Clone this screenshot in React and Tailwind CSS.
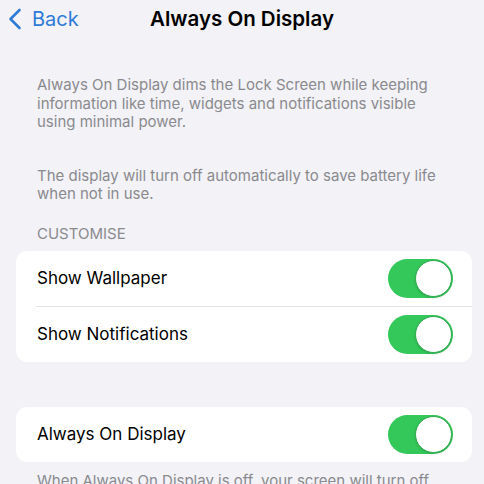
import React from 'react';

function Toggle({ on = true }) {
  return (
    <div
      className={`w-[65px] h-[39px] rounded-full p-[1px] flex ${on ? 'bg-[#34c759] justify-end' : 'bg-[#e5e5ea] justify-start'}`}
    >
      <div className="w-[37px] h-[37px] rounded-full bg-white border border-[#2aa84a] shadow-sm" />
    </div>
  );
}

function Row({ label, divider }) {
  return (
    <div className="flex flex-col">
      <div className="flex items-center justify-between h-[55px] pl-[21px] pr-[19px]">
        <span className="text-[17px] text-black">{label}</span>
        <Toggle />
      </div>
      {divider && <div className="ml-[20px] h-px bg-[#e2e2e7]" />}
    </div>
  );
}

export default function App() {
  return (
    <div className="min-h-screen bg-[#f2f2f7] font-['Inter',sans-serif] overflow-hidden">
      {/* Navigation bar */}
      <div className="grid grid-cols-[1fr_auto_1fr] items-center h-[38px] px-[8px]">
        <button className="flex items-center gap-[10px] text-[#2f7bd8]">
          <svg width="14" height="22" viewBox="0 0 14 22" fill="none">
            <path d="M11.5 2 L2.5 11 L11.5 20" stroke="currentColor" strokeWidth="2.6" strokeLinecap="round" strokeLinejoin="round" />
          </svg>
          <span className="text-[20px]">Back</span>
        </button>
        <h1 className="text-[20.5px] font-semibold text-black">Always On Display</h1>
        <div />
      </div>

      <div className="px-[37px] mt-[38px] text-[15px] leading-[18.5px] text-[#8a8a8e]">
        <p>
          Always On Display dims the Lock Screen while keeping information like time, widgets and notifications visible using minimal power.
        </p>
        <p className="mt-[35px]">
          The display will turn off automatically to save battery life when not in use.
        </p>
        <p className="mt-[21px] uppercase">Customise</p>
      </div>

      <div className="mx-[16px] w-[456px] mt-[8px] bg-white rounded-[11px] flex flex-col">
        <Row label="Show Wallpaper" divider />
        <Row label="Show Notifications" />
      </div>

      <div className="mx-[16px] w-[456px] mt-[45px] bg-white rounded-[11px]">
        <Row label="Always On Display" />
      </div>

      <p className="px-[37px] mt-[10px] text-[15px] leading-[18.5px] text-[#8a8a8e]">
        When Always On Display is off, your screen will turn off completely when your iPhone is locked.
      </p>
    </div>
  );
}
